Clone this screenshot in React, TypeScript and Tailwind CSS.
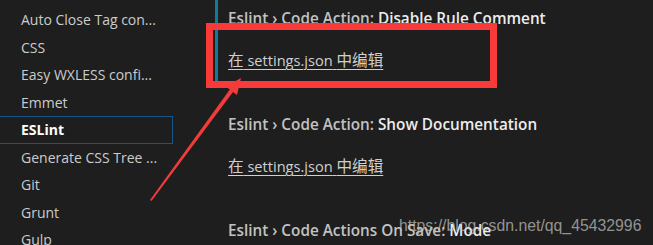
import React from "react";

const sideItems = [
  "Auto Close Tag con...",
  "CSS",
  "Easy WXLESS confi...",
  "Emmet",
  "ESLint",
  "Generate CSS Tree ...",
  "Git",
  "Grunt",
  "Gulp",
];

function Setting({
  prefix,
  name,
  link,
  focused,
}: {
  prefix: string;
  name: string;
  link?: boolean;
  focused?: boolean;
}) {
  return (
    <div
      className={
        "h-[106px] shrink-0 pl-[10px] pt-[32px] border-l-[3px] " +
        (focused ? "border-[#0f7c9e]" : "border-transparent")
      }
    >
      <div className="h-5 leading-5 text-[15.3px] font-semibold whitespace-nowrap">
        <span className="text-[#c2c2c2]">{prefix}</span>
        <span className="text-[#ececec]">{name}</span>
      </div>
      {link && (
        <div className="mt-[22px] h-5 leading-5 text-[14.6px] text-[#d0d0d0] underline underline-offset-[3px] whitespace-nowrap">
          <span className="text-[15.6px]">在</span> settings.json{" "}
          <span className="text-[15.6px]">中编辑</span>
        </div>
      )}
    </div>
  );
}

export default function App() {
  return (
    <div
      className="relative w-[653px] h-[245px] overflow-hidden bg-[#1e1e1e] flex"
      style={{ fontFamily: '"Open Sans", "Noto Sans CJK SC", sans-serif' }}
    >
      {/* sidebar tree */}
      <div className="w-[212px] shrink-0 pt-[6px] flex flex-col">
        {sideItems.map((s) => (
          <div
            key={s}
            className={
              "h-[27.5px] shrink-0 flex items-center pl-[21px] text-[14px] whitespace-nowrap " +
              (s === "ESLint"
                ? "w-[173px] border border-l-0 border-[#14568a] font-bold text-white"
                : "text-[#cccccc]")
            }
          >
            {s}
          </div>
        ))}
      </div>

      {/* settings list */}
      <div className="flex flex-col mt-[-24px] ml-[3px]">
        <Setting prefix="Eslint › Code Action: " name="Disable Rule Comment" link focused />
        <Setting prefix="Eslint › Code Action: " name="Show Documentation" link />
        <Setting prefix="Eslint › Code Actions On Save: " name="Mode" />
      </div>

      {/* annotation: red box */}
      <div className="absolute left-[206px] top-[23px] w-[291px] h-[65px] border-[7px] border-[#f83a3a]" />

      {/* annotation: arrow */}
      <svg className="absolute left-0 top-0" width="653" height="245" viewBox="0 0 653 245">
        <polygon
          points="150,200 229.8,89.6 225.8,86.6 241,78 237,95 233,92 151.5,201"
          fill="#f23c3c"
        />
      </svg>

      {/* watermark */}
      <div
        className="absolute left-[399px] top-[214px] text-[15.8px] leading-6 text-[#c8c8c8]/70 whitespace-nowrap"
        style={{ fontFamily: '"Liberation Sans", Arial, sans-serif' }}
      >
        https://blog.csdn.net/qq_45432996
      </div>
    </div>
  );
}
